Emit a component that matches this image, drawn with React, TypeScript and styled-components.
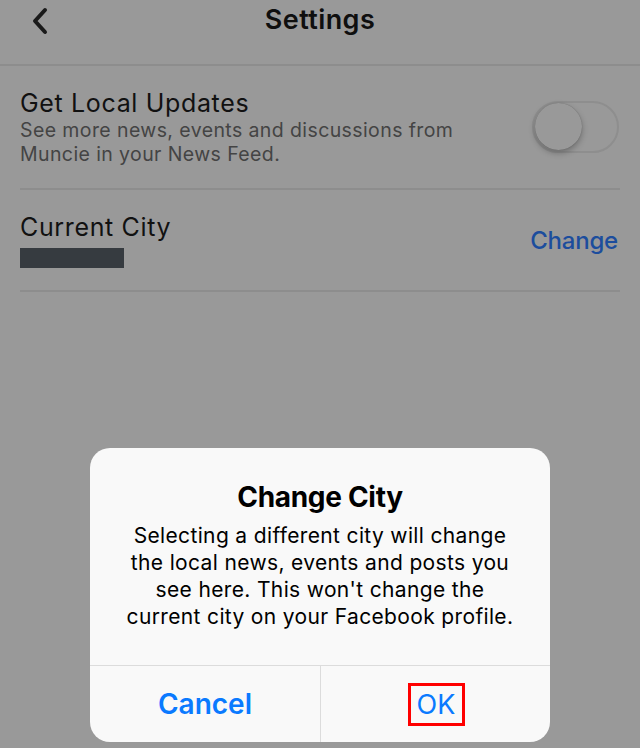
import * as React from 'react';
import styled, { createGlobalStyle } from 'styled-components';

const GlobalStyle = createGlobalStyle`
    html, body {
        margin: 0;
        padding: 0;
        background: #999999;
    }
    body {
        font-family: Inter, "Open Sans", "Liberation Sans", sans-serif;
        -webkit-font-smoothing: antialiased;
    }
`;

const Page = styled.div`
    position: relative;
    width: 640px;
    height: 748px;
    overflow: hidden;
    background: #999999;
`;

const Header = styled.div`
    height: 64px;
    display: flex;
    align-items: flex-start;
    justify-content: center;
    position: relative;
    border-bottom: 2px solid #8d8d8d;
`;

const BackButton = styled.div`
    position: absolute;
    left: 30px;
    top: 6px;
    width: 20px;
    height: 30px;
`;

const Title = styled.h1`
    margin: 3px 0 0;
    font-size: 27px;
    font-weight: 600;
    color: #0f0f0f;
    letter-spacing: 0.4px;
`;

const List = styled.div`
    padding: 0 20px;
`;

const Row = styled.div<{ $height: number }>`
    height: ${p => p.$height}px;
    display: flex;
    align-items: center;
    justify-content: space-between;
    border-bottom: 2px solid #8d8d8d;
    box-sizing: border-box;
`;

const RowText = styled.div`
    display: flex;
    flex-direction: column;
`;

const RowTitle = styled.div`
    font-size: 25px;
    color: #111;
    letter-spacing: 0.65px;
    line-height: 30px;
`;

const RowSub = styled.div`
    font-size: 19.5px;
    line-height: 24px;
    color: #444;
    letter-spacing: 0.4px;
`;

const Redacted = styled.div`
    width: 104px;
    height: 20px;
    margin-top: 6px;
    background: #363b40;
`;

const Toggle = styled.div`
    width: 83px;
    height: 48px;
    border: 2px solid #8e8e8e;
    border-radius: 26px;
    margin-right: 1px;
    position: relative;
    flex-shrink: 0;
`;

const Knob = styled.div`
    position: absolute;
    left: 1px;
    top: 0;
    width: 47px;
    height: 47px;
    border-radius: 50%;
    background: #999;
    box-shadow: 0 3px 6px rgba(0, 0, 0, 0.28), 0 0 1px rgba(0, 0, 0, 0.3);
`;

const LinkText = styled.div`
    font-size: 24px;
    font-weight: 500;
    color: #1c4d9d;
    letter-spacing: -0.2px;
    margin-right: 2px;
`;

const Dialog = styled.div`
    position: absolute;
    left: 90px;
    top: 448px;
    width: 460px;
    height: 294px;
    border-radius: 20px;
    background: #f9f9f9;
    display: flex;
    flex-direction: column;
    overflow: hidden;
`;

const DialogBody = styled.div`
    flex: 1;
    display: flex;
    flex-direction: column;
    align-items: center;
    padding-top: 33px;
    border-bottom: 1px solid #dcdcdc;
`;

const DialogTitle = styled.div`
    font-size: 28px;
    font-weight: 700;
    color: #000;
    letter-spacing: -0.3px;
    line-height: 32px;
`;

const DialogMessage = styled.div`
    margin-top: 9px;
    font-size: 21px;
    line-height: 27px;
    text-align: center;
    color: #000;
    letter-spacing: 0.35px;
`;

const Buttons = styled.div`
    height: 76px;
    display: grid;
    grid-template-columns: 1fr 1fr;
`;

const DialogButton = styled.div<{ $bold?: boolean }>`
    display: flex;
    align-items: center;
    justify-content: center;
    font-size: 28px;
    font-weight: ${p => (p.$bold ? 600 : 400)};
    color: #0a7aff;
    & + & {
        border-left: 1px solid #dcdcdc;
    }
`;

const Highlight = styled.span`
    border: 3px solid #ff0000;
    padding: 2px 7px 2px 6px;
    line-height: 33px;
    margin-left: 2px;
    font-size: 27px;
`;

export default function App() {
    return (
        <Page>
            <GlobalStyle />
            <Header>
                <BackButton>
                    <svg width="20" height="30" viewBox="0 0 20 30">
                        <path d="M15 4 L5 15 L15 26" fill="none" stroke="#1a1a1a" strokeWidth="4" strokeLinecap="round" strokeLinejoin="round" />
                    </svg>
                </BackButton>
                <Title>Settings</Title>
            </Header>
            <List>
                <Row $height={124}>
                    <RowText>
                        <RowTitle>Get Local Updates</RowTitle>
                        <RowSub>
                            See more news, events and discussions from
                            <br />
                            Muncie in your News Feed.
                        </RowSub>
                    </RowText>
                    <Toggle>
                        <Knob />
                    </Toggle>
                </Row>
                <Row $height={102}>
                    <RowText>
                        <RowTitle>Current City</RowTitle>
                        <Redacted />
                    </RowText>
                    <LinkText>Change</LinkText>
                </Row>
            </List>
            <Dialog>
                <DialogBody>
                    <DialogTitle>Change City</DialogTitle>
                    <DialogMessage>
                        Selecting a different city will change
                        <br />
                        the local news, events and posts you
                        <br />
                        see here. This won't change the
                        <br />
                        current city on your Facebook profile.
                    </DialogMessage>
                </DialogBody>
                <Buttons>
                    <DialogButton $bold>Cancel</DialogButton>
                    <DialogButton>
                        <Highlight>OK</Highlight>
                    </DialogButton>
                </Buttons>
            </Dialog>
        </Page>
    );
}
